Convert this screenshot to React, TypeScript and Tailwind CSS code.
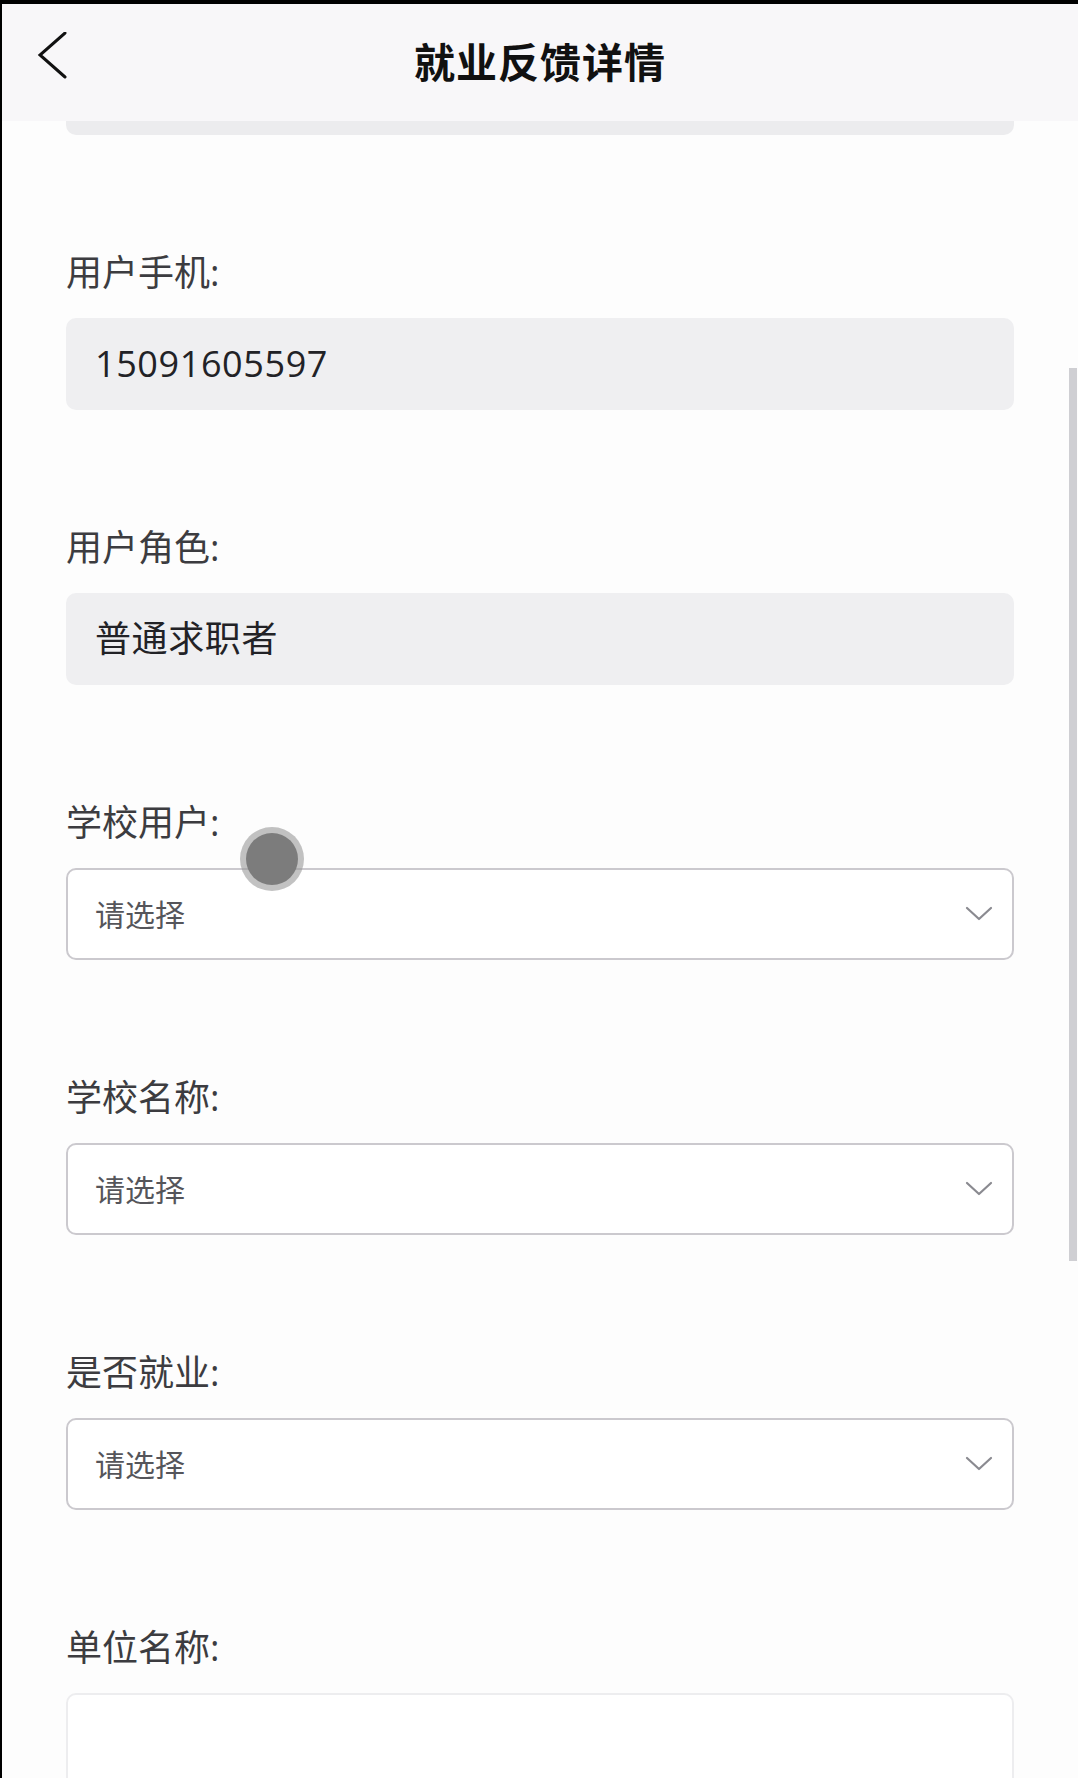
const font = { fontFamily: '"Open Sans", "Noto Sans CJK SC", sans-serif' };

function Label({ text }: { text: string }) {
  return <div className="h-[48px] leading-[50px] text-[36px] text-[#3c3c40] mb-[22px]">{text}</div>;
}

function ReadonlyField({ label, value }: { label: string; value: string }) {
  return (
    <div className="mt-[113px]">
      <Label text={label} />
      <div className="h-[92px] rounded-[10px] bg-[#efeff1] px-[29px] flex items-center text-[36px] text-[#222226] tracking-[0.6px]">
        {value}
      </div>
    </div>
  );
}

function SelectField({ label }: { label: string }) {
  return (
    <div className="mt-[113px]">
      <Label text={label} />
      <div className="h-[92px] rounded-[10px] border-2 border-[#cbc9ce] bg-white pl-[27px] pr-[19px] flex items-center justify-between">
        <span className="text-[30px] text-[#55555a]">请选择</span>
        <svg width="28" height="16" viewBox="0 0 28 16" fill="none">
          <polyline points="2,2 14,13 26,2" stroke="#8a8a90" strokeWidth="2.2" strokeLinecap="round" strokeLinejoin="round" />
        </svg>
      </div>
    </div>
  );
}

export default function App() {
  return (
    <div
      style={font}
      className="relative w-[1078px] h-[1778px] overflow-hidden bg-[#fdfdfd] border-t-4 border-l-2 border-black flex flex-col"
    >
      {/* Header */}
      <div className="h-[117px] shrink-0 bg-[#f8f7f9] flex items-center justify-center relative">
        <svg className="absolute left-[34px] top-[28px]" width="32" height="48" viewBox="0 0 32 48" fill="none">
          <polyline points="29,1 4,23 29,45" stroke="#111" strokeWidth="3" strokeLinecap="round" strokeLinejoin="miter" />
        </svg>
        <h1 className="text-[41px] font-bold text-[#111] tracking-[1px]">就业反馈详情</h1>
      </div>

      <div className="px-[64px] flex-1">
        {/* partially scrolled-away field */}
        <div className="h-[14px] rounded-b-[10px] bg-[#ececee]" />

        <div className="mt-[1px]" />
        <ReadonlyField label="用户手机:" value="15091605597" />
        <ReadonlyField label="用户角色:" value="普通求职者" />
        <SelectField label="学校用户:" />
        <SelectField label="学校名称:" />
        <SelectField label="是否就业:" />

        <div className="mt-[113px]">
          <Label text="单位名称:" />
          <div className="h-[160px] rounded-[10px] border-2 border-[#ededef] bg-white" />
        </div>
      </div>

      {/* scrollbar */}
      <div className="absolute right-[1px] top-[364px] w-[8px] h-[893px] bg-[#cfcfd3]" />

      {/* touch indicator */}
      <div className="absolute left-[238px] top-[823px] w-[64px] h-[64px] rounded-full bg-[#9a9a9a]/60 flex items-center justify-center">
        <div className="w-[52px] h-[52px] rounded-full bg-[#7c7c7c]" />
      </div>
    </div>
  );
}
